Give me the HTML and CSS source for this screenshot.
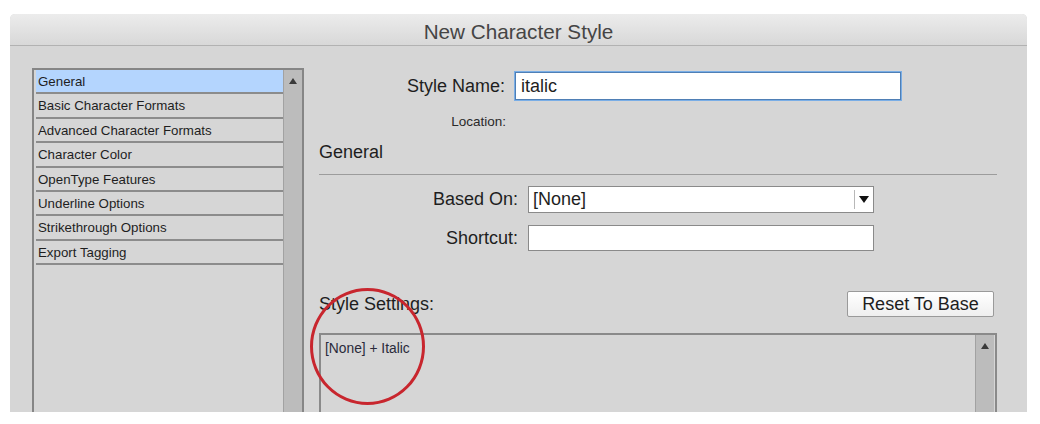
FILE: index.html
```
<!DOCTYPE html>
<html lang="en">
<head>
<meta charset="UTF-8">
<title>New Character Style</title>
<link rel="stylesheet" href="styles.css">
</head>
<body>
<div class="window">
  <div class="titlebar">New Character Style</div>

  <div class="dialog">
    <!-- venstre liste med kategorier -->
    <div class="sidebar">
      <div class="list">
        <ul class="items">
          <li class="item selected">General</li>
          <li class="item">Basic Character Formats</li>
          <li class="item">Advanced Character Formats</li>
          <li class="item">Character Color</li>
          <li class="item">OpenType Features</li>
          <li class="item">Underline Options</li>
          <li class="item">Strikethrough Options</li>
          <li class="item">Export Tagging</li>
        </ul>
        <div class="scrollbar"><span class="arrow-up"></span></div>
      </div>
    </div>

    <!-- højre side med felter -->
    <div class="main">
      <div class="name-row">
        <label for="styleName" class="label">Style Name:</label>
        <input type="text" id="styleName" class="name-input" value="italic">
      </div>
      <div class="location">Location:</div>

      <div class="section-title">General</div>

      <div class="fields">
        <label class="label">Based On:</label>
        <div class="select">
          <span class="select-value">[None]</span>
          <span class="select-btn"><span class="arrow-down"></span></span>
        </div>
        <label for="shortcut" class="label">Shortcut:</label>
        <input type="text" id="shortcut" class="field-input">
      </div>

      <div class="settings-head">
        <span class="settings-title">Style Settings:</span>
        <button type="button" class="reset-btn">Reset To Base</button>
      </div>

      <div class="settings-box">
        <div class="settings-text">[None] + Italic</div>
        <div class="scrollbar"><span class="arrow-up"></span></div>
      </div>
    </div>
  </div>

  <div class="circle"></div>
</div>
</body>
</html>
```

FILE: styles.css
```
body {
  margin: 0;
  background: #fff;
  font-family: "Liberation Sans", Arial, sans-serif;
  color: #1e1e1e;
}
.window {
  position: relative;
  margin: 14px 0 0 10px;
  width: 1017px;
  height: 398px;
  overflow: hidden;
  background: #d6d6d6;
  border-radius: 5px 5px 0 0;
}
.titlebar {
  height: 31px;
  line-height: 35px;
  text-align: center;
  font-size: 20.7px;
  color: #454545;
  background: linear-gradient(#ececec, #d8d8d8);
  border-bottom: 1px solid #b2b2b2;
}
.dialog {
  display: flex;
  padding: 22px 0 0 22px;
}
.sidebar {
  width: 272px;
  flex: none;
}
.list {
  display: flex;
  height: 380px;
  border: 2px solid #868686;
  border-bottom: none;
  box-sizing: border-box;
}
.items {
  list-style: none;
  margin: 0;
  padding: 0 0 0 2px;
  flex: 1;
}
.item {
  height: 22.4px;
  line-height: 23px;
  font-size: 13.3px;
  padding-left: 2px;
  border-bottom: 2px solid #8c8c8c;
  color: #1e1e1e;
}
.item.selected {
  background: #b4d5fe;
}
.scrollbar {
  width: 19px;
  flex: none;
  background: #bcbcbc;
  border-left: 1px solid #a2a2a2;
  display: flex;
  justify-content: center;
  padding-top: 8px;
  box-sizing: border-box;
}
.arrow-up {
  width: 0;
  height: 0;
  border-left: 4px solid transparent;
  border-right: 4px solid transparent;
  border-bottom: 6px solid #3a3a3a;
}
.arrow-down {
  width: 0;
  height: 0;
  border-left: 5px solid transparent;
  border-right: 5px solid transparent;
  border-top: 7px solid #111;
}
.main {
  flex: 1;
  padding: 0 30px 0 15px;
}
.label {
  font-size: 18px;
  text-align: right;
  color: #1e1e1e;
}
.name-row {
  display: grid;
  grid-template-columns: 186px 386px;
  column-gap: 10px;
  align-items: center;
  margin-top: 4px;
}
.name-input {
  height: 28px;
  box-sizing: border-box;
  border: 1px solid #4f7fb5;
  box-shadow: 0 0 0 1px #7aaee6;
  padding: 0 5px;
  font-family: "Liberation Sans", Arial, sans-serif;
  font-size: 18px;
  color: #1e1e1e;
  outline: none;
}
.location {
  width: 187px;
  text-align: right;
  font-size: 13.5px;
  line-height: 16px;
  margin-top: 14px;
  color: #2a2a2a;
}
.section-title {
  font-size: 18px;
  line-height: 22px;
  margin-top: 11px;
  padding-bottom: 11px;
  border-bottom: 1px solid #9c9c9c;
}
.fields {
  display: grid;
  grid-template-columns: 199px 346px;
  column-gap: 10px;
  row-gap: 12px;
  align-items: center;
  margin-top: 11px;
}
.select {
  display: flex;
  height: 27px;
  box-sizing: border-box;
  border: 1px solid #8a8a8a;
  background: #fff;
}
.select-value {
  flex: 1;
  font-size: 18px;
  line-height: 25px;
  padding-left: 4px;
}
.select-btn {
  width: 18px;
  margin: 3px 0;
  border-left: 1px solid #b8b8b8;
  display: flex;
  align-items: center;
  justify-content: center;
}
.field-input {
  height: 26px;
  box-sizing: border-box;
  border: 1px solid #8a8a8a;
  background: #fff;
  outline: none;
}
.settings-head {
  display: flex;
  justify-content: space-between;
  align-items: center;
  margin-top: 40px;
  padding-right: 3px;
}
.settings-title {
  font-size: 18px;
}
.reset-btn {
  width: 147px;
  height: 26px;
  font-family: "Liberation Sans", Arial, sans-serif;
  font-size: 18px;
  color: #1e1e1e;
  background: linear-gradient(#ffffff, #efefef);
  border: 1px solid #9a9a9a;
  border-radius: 2px;
  padding: 0;
}
.settings-box {
  display: flex;
  margin-top: 16px;
  height: 120px;
  border: 2px solid #8a8a8a;
  border-bottom: none;
  box-sizing: border-box;
}
.settings-text {
  flex: 1;
  font-size: 13.8px;
  padding: 6px 4px;
  color: #2a2a3a;
}
.settings-box .scrollbar {
  margin-right: 1px;
}
/* rød markering rundt om teksten */
.circle {
  position: absolute;
  left: 300px;
  top: 274px;
  width: 115px;
  height: 117px;
  box-sizing: border-box;
  border: 3px solid #c8262e;
  border-radius: 50%;
}
```
